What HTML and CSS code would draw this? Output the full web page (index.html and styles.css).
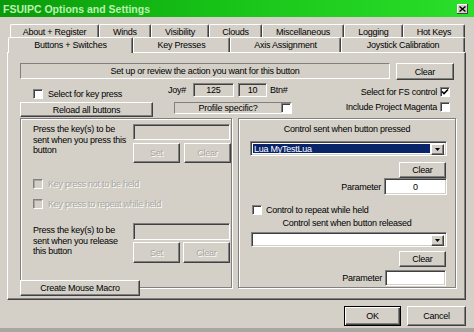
FILE: index.html
```html
<!DOCTYPE html>
<html>
<head>
<meta charset="utf-8">
<title>FSUIPC Options and Settings</title>
<link rel="stylesheet" href="styles.css">
</head>
<body>
<div class="titlebar">
  <span class="title">FSUIPC Options and Settings</span>
  <span class="close"><svg width="7" height="6" viewBox="0 0 7 6"><path d="M0.5 0.5 L6.5 5.5 M6.5 0.5 L0.5 5.5" stroke="#000" stroke-width="1.4"/></svg></span>
</div>

<div class="tabrow row1">
  <div class="tab w-about">About + Register</div>
  <div class="tab w-winds">Winds</div>
  <div class="tab w-vis">Visibility</div>
  <div class="tab w-clouds">Clouds</div>
  <div class="tab w-misc">Miscellaneous</div>
  <div class="tab w-log">Logging</div>
  <div class="tab w-hot">Hot Keys</div>
</div>
<div class="tabrow row2">
  <div class="tab sel w-btns">Buttons + Switches</div>
  <div class="tab w-keys">Key Presses</div>
  <div class="tab w-axis">Axis Assignment</div>
  <div class="tab w-joy">Joystick Calibration</div>
</div>

<div class="panel">
  <div class="rowa">
    <div class="static status">Set up or review the action you want for this button</div>
    <div class="btn clear-top">Clear</div>
  </div>

  <div class="rowb">
    <div class="colb1">
      <label class="check keypress"><span class="cb"></span><span>Select for key press</span></label>
      <div class="btn reload">Reload all buttons</div>
    </div>
    <div class="colb2">
      <div class="joyrow">
        <span class="joylbl">Joy#</span>
        <span class="ro joybox">125</span>
        <span class="ro btnbox">10</span>
        <span class="btnlbl">Btn#</span>
      </div>
      <div class="static profile"><span class="proftext">Profile specific?</span><span class="cb profcb"></span></div>
    </div>
    <div class="colb3">
      <label class="check rcheck fs"><span>Select for FS control</span><span class="cb"><svg width="8" height="8" viewBox="0 0 8 8"><path d="M1 3.5 L3 5.5 L7 1.5" fill="none" stroke="#000" stroke-width="1.6"/></svg></span></label>
      <label class="check rcheck pm"><span>Include Project Magenta</span><span class="cb"></span></label>
    </div>
  </div>

  <div class="rowc">
    <div class="group gleft">
      <div class="keysec sec1">
        <div class="keytext">Press the key(s) to be<br>sent when you press this<br>button</div>
        <div class="keyctl">
          <div class="field dis keyedit"></div>
          <div class="keybtns">
            <div class="btn dis setb">Set</div>
            <div class="btn dis clrb">Clear</div>
          </div>
        </div>
      </div>
      <label class="check dis chk1"><span class="cb dcb"></span><span>Key press not to be held</span></label>
      <label class="check dis chk2"><span class="cb dcb"></span><span>Key press to repeat while held</span></label>
      <div class="keysec sec2">
        <div class="keytext t2">Press the key(s) to be<br>sent when you release<br>this button</div>
        <div class="keyctl">
          <div class="field dis keyedit k2"></div>
          <div class="keybtns b2">
            <div class="btn dis setb">Set</div>
            <div class="btn dis clrb">Clear</div>
          </div>
        </div>
      </div>
      <div class="btn macro">Create Mouse Macro</div>
    </div>

    <div class="group gright">
      <div class="gtitle t1">Control sent when button pressed</div>
      <div class="field combo c1">
        <span class="csel">Lua MyTestLua</span>
        <span class="btn carrow"><svg width="5" height="3" viewBox="0 0 5 3"><path d="M0 0 H5 L2.5 3 Z" fill="#000"/></svg></span>
      </div>
      <div class="btn rclear r1">Clear</div>
      <div class="paramrow p1">
        <span class="plbl">Parameter</span>
        <span class="field pbox">0</span>
      </div>
      <label class="check repcheck"><span class="cb"></span><span>Control to repeat while held</span></label>
      <div class="gtitle t2">Control sent when button released</div>
      <div class="field combo c2">
        <span class="cempty"></span>
        <span class="btn carrow"><svg width="5" height="3" viewBox="0 0 5 3"><path d="M0 0 H5 L2.5 3 Z" fill="#000"/></svg></span>
      </div>
      <div class="btn rclear r2">Clear</div>
      <div class="paramrow p2">
        <span class="plbl">Parameter</span>
        <span class="field pbox pb2"></span>
      </div>
    </div>
  </div>
</div>

<div class="bottom">
  <div class="btn ok">OK</div>
  <div class="btn cancel">Cancel</div>
</div>
<div class="strip"></div>
</body>
</html>
```

FILE: styles.css
```css
* { box-sizing: border-box; }
html, body { margin: 0; padding: 0; }
body {
  width: 474px;
  height: 332px;
  overflow: hidden;
  background: #d4d0c8;
  font-family: "Liberation Sans", Arial, sans-serif;
  font-size: 9px;
  letter-spacing: -0.25px;
  color: #000;
}

/* title bar */
.titlebar {
  height: 17px;
  display: flex;
  align-items: center;
  justify-content: space-between;
  padding: 0 6px 0 3px;
  background: linear-gradient(to right, #0a990a, #17c217 45%, #2bdf2b);
}
.title {
  font-weight: bold;
  font-size: 10.5px;
  letter-spacing: 0;
  color: #b9f2b0;
}
.close {
  width: 11px;
  height: 10px;
  background: #d4d0c8;
  box-shadow: inset -1px -1px #404040, inset 1px 1px #fff;
  display: flex;
  align-items: center;
  justify-content: center;
}

/* tabs */
.tabrow { display: flex; align-items: flex-start; }
.row1 { margin: 7px 0 0 10px; height: 13px; }
.row2 { margin-left: 8px; height: 15px; position: relative; z-index: 1; }
.tab {
  display: flex;
  align-items: center;
  justify-content: center;
  background: #d4d0c8;
  border-top: 1px solid #fff;
  border-left: 1px solid #fff;
  border-right: 1px solid #404040;
  box-shadow: inset -1px 0 #808080;
  border-radius: 2px 2px 0 0;
  white-space: nowrap;
}
.row1 .tab { height: 13px; padding-top: 1px; }
.row2 .tab { height: 15px; }
.row2 .tab.sel { height: 16px; padding-bottom: 1px; }
.w-about { width: 89px; }
.w-winds { width: 52px; }
.w-vis { width: 58px; }
.w-clouds { width: 53px; }
.w-misc { width: 82px; }
.w-log { width: 59px; }
.w-hot { width: 62px; }
.w-btns { width: 125px; }
.w-keys { width: 97px; }
.w-axis { width: 111px; }
.w-joy { width: 124px; }

/* panel */
.panel {
  margin-left: 7px;
  width: 459px;
  height: 248px;
  border-top: 1px solid #fff;
  border-left: 1px solid #fff;
  border-right: 1px solid #404040;
  border-bottom: 1px solid #404040;
  box-shadow: inset -1px -1px #808080;
}

/* common controls */
.btn {
  display: flex;
  align-items: center;
  justify-content: center;
  background: #d4d0c8;
  border-top: 1px solid #fff;
  border-left: 1px solid #fff;
  border-right: 1px solid #404040;
  border-bottom: 1px solid #404040;
  box-shadow: inset -1px -1px #808080;
  white-space: nowrap;
  flex: none;
}
.btn.dis, .check.dis, .dis {
  color: #a9a6a0;
  text-shadow: 1px 1px #fff;
}
.static {
  display: flex;
  align-items: center;
  justify-content: center;
  border-top: 1px solid #808080;
  border-left: 1px solid #808080;
  border-right: 1px solid #fff;
  border-bottom: 1px solid #fff;
}
.ro {
  display: flex;
  align-items: center;
  justify-content: center;
  border-top: 1px solid #808080;
  border-left: 1px solid #808080;
  border-right: 1px solid #fff;
  border-bottom: 1px solid #fff;
  box-shadow: inset 1px 1px #404040;
}
.field {
  background: #fff;
  border-top: 1px solid #808080;
  border-left: 1px solid #808080;
  border-right: 1px solid #fff;
  border-bottom: 1px solid #fff;
  box-shadow: inset 1px 1px #404040, inset -1px -1px #d4d0c8;
}
.field.dis { background: #d4d0c8; }
.check {
  display: flex;
  align-items: center;
  gap: 5px;
  height: 10px;
  white-space: nowrap;
}
.cb {
  width: 10px;
  height: 10px;
  flex: none;
  background: #fff;
  border-top: 1px solid #808080;
  border-left: 1px solid #808080;
  border-right: 1px solid #fff;
  border-bottom: 1px solid #fff;
  box-shadow: inset 1px 1px #404040;
  display: flex;
  align-items: center;
  justify-content: center;
}
.cb.dcb { background: #d4d0c8; box-shadow: inset 1px 1px #a9a6a0; }

/* row A */
.rowa {
  display: flex;
  gap: 6px;
  margin-top: 10px;
  padding-left: 12px;
}
.status { width: 370px; height: 16px; }
.clear-top { width: 58px; height: 17px; }

/* row B */
.rowb {
  display: flex;
  height: 35px;
  margin-top: 3px;
  padding-left: 12px;
  padding-right: 15px;
}
.colb1 { width: 133px; }
.keypress { margin-top: 6px; padding-left: 13px; }
.reload { margin-top: 3px; width: 133px; height: 15px; }
.colb2 { margin-left: 15px; }
.joyrow { display: flex; align-items: center; height: 14px; }
.joylbl { width: 25px; }
.joybox { width: 41px; height: 14px; }
.btnbox { width: 29px; height: 14px; margin-left: 4px; }
.btnlbl { margin-left: 3px; }
.profile {
  margin-top: 5px;
  margin-left: 6px;
  width: 118px;
  height: 12px;
  justify-content: space-between;
}
.proftext { flex: 1; text-align: center; }
.profcb { width: 10px; height: 10px; }
.colb3 {
  margin-left: auto;
  display: flex;
  flex-direction: column;
  align-items: flex-end;
}
.rcheck { gap: 3px; }
.fs { margin-top: 4px; }
.pm { margin-top: 5px; }

/* row C - group boxes */
.rowc {
  display: flex;
  gap: 6px;
  padding-left: 12px;
}
.group {
  height: 170px;
  border: 1px solid #808080;
  box-shadow: inset 1px 1px #fff, 1px 1px #fff;
  display: flex;
  flex-direction: column;
}
.gleft { width: 212px; position: relative; }
.gright { width: 218px; }

.keysec { display: flex; padding-left: 12px; }
.sec1 { margin-top: 5px; }
.sec2 { margin-top: 14px; }
.keytext { width: 100px; line-height: 10.5px; }
.t2 { padding-top: 2px; }
.keyctl { display: flex; flex-direction: column; }
.keyedit { width: 97px; height: 16px; }
.k2 { height: 17px; }
.keybtns { display: flex; gap: 4px; margin-top: 3px; }
.b2 { margin-top: 2px; gap: 3px; }
.setb, .clrb { width: 47px; height: 20px; }
.b2 .setb, .b2 .clrb { width: 47px; height: 21px; }
.chk1 { margin-top: 16px; padding-left: 12px; }
.chk2 { margin-top: 10px; padding-left: 12px; }
.macro {
  position: absolute;
  left: -1px;
  top: 161px;
  width: 120px;
  height: 16px;
}

.gtitle { text-align: center; line-height: 11px; }
.gtitle.t1 { margin-top: 5px; }
.gtitle.t2 { margin-top: 1px; }
.combo {
  display: flex;
  align-items: stretch;
  height: 15px;
  padding: 2px 2px 2px 2px;
}
.c1 { margin: 6px 0 0 11px; width: 197px; }
.c2 { margin: 3px 0 0 12px; width: 196px; }
.csel {
  flex: 1;
  background: #0a246a;
  color: #fff;
  padding-left: 1px;
  display: flex;
  align-items: center;
}
.cempty { flex: 1; }
.carrow { width: 13px; height: 11px; margin-left: 1px; }
.rclear { width: 47px; height: 16px; align-self: flex-end; margin-right: 9px; }
.r1 { margin-top: 6px; }
.r2 { margin-top: 4px; }
.paramrow {
  display: flex;
  align-items: center;
  justify-content: flex-end;
  gap: 3px;
  margin-right: 8px;
}
.p1 { margin-top: 0; }
.p2 { margin-top: 3px; margin-right: 9px; }
.pbox {
  width: 63px;
  height: 17px;
  display: flex;
  align-items: center;
  justify-content: center;
}
.pb2 { width: 61px; height: 16px; }
.repcheck { margin-top: 10px; padding-left: 13px; gap: 4px; }

/* bottom */
.bottom {
  display: flex;
  justify-content: flex-end;
  gap: 6px;
  margin-top: 6px;
  padding-right: 8px;
}
.ok {
  width: 57px;
  height: 20px;
  outline: 1px solid #000;
  outline-offset: -1px;
  border: 1px solid #000;
  box-shadow: inset 1px 1px #fff, inset -1px -1px #404040, inset -2px -2px #808080;
}
.cancel { width: 59px; height: 20px; }
.strip {
  margin-top: 2px;
  height: 4px;
  background: #a9a6a1;
}
```
